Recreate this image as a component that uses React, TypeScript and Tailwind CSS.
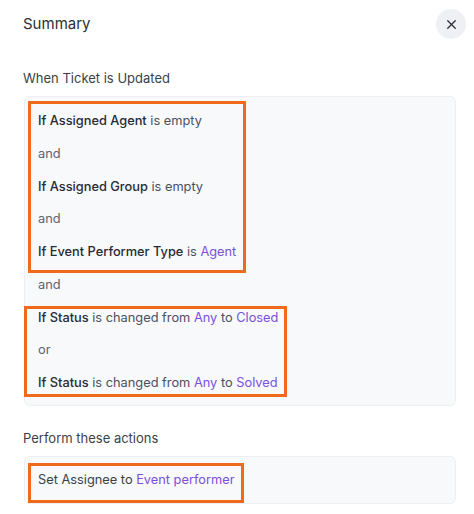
import React from "react";
import { X } from "lucide-react";

type Part = { text: string; kind?: "bold" | "value" };

const conditions: Part[][] = [
    [{ text: "If Assigned Agent", kind: "bold" }, { text: " is empty" }],
    [{ text: "and" }],
    [{ text: "If Assigned Group", kind: "bold" }, { text: " is empty" }],
    [{ text: "and" }],
    [{ text: "If Event Performer Type", kind: "bold" }, { text: " is " }, { text: "Agent", kind: "value" }],
    [{ text: "and" }],
    [
        { text: "If Status", kind: "bold" },
        { text: " is changed from " },
        { text: "Any", kind: "value" },
        { text: " to " },
        { text: "Closed", kind: "value" },
    ],
    [{ text: "or" }],
    [
        { text: "If Status", kind: "bold" },
        { text: " is changed from " },
        { text: "Any", kind: "value" },
        { text: " to " },
        { text: "Solved", kind: "value" },
    ],
];

function Line({ parts }: { parts: Part[] }) {
    const plain = parts.length === 1 && !parts[0].kind;
    return (
        <div className={plain ? "h-[32.75px] leading-[32.75px] text-[#5d636e]" : "h-[32.75px] leading-[32.75px] text-[#4a505b]"}>
            {parts.map((p, i) =>
                p.kind === "bold" ? (
                    <span key={i} className="font-medium text-[#272b33]">
                        {p.text}
                    </span>
                ) : p.kind === "value" ? (
                    <span key={i} className="text-[#7b4fdc]">
                        {p.text}
                    </span>
                ) : (
                    <span key={i}>{p.text}</span>
                )
            )}
        </div>
    );
}

export default function App() {
    return (
        <div
            className="w-[474px] h-[514px] bg-white pl-6 pr-[18px] text-[13px] overflow-hidden"
            style={{ fontFamily: "Inter, 'Noto Sans', sans-serif" }}
        >
            <div className="h-12 flex items-center justify-between">
                <div className="text-[15px] text-[#2b2f37] -ml-px">Summary</div>
                <button className="w-[30px] h-[30px] rounded-full bg-[#eef0f3] flex items-center justify-center -mr-[10px] text-[#2d3139]">
                    <X size={15} strokeWidth={2.2} />
                </button>
            </div>

            <div className="mt-[20px] h-5 leading-5 text-[#3a3f48] -ml-px">When Ticket is Updated</div>
            <div className="relative mt-2 rounded-md border border-[#eceef2] bg-[#f8f9fb] pl-[13px] pt-[8px] pb-[5px] text-[12.8px]">
                {conditions.map((parts, i) => (
                    <Line key={i} parts={parts} />
                ))}
                <div className="absolute left-[3px] top-[4px] w-[218px] h-[172px] border-[3px] border-[#f06a1b]" />
                <div className="absolute -left-px top-[209px] w-[263px] h-[91px] border-[3px] border-[#f06a1b]" />
            </div>

            <div className="mt-[22px] h-5 leading-5 text-[#3a3f48] -ml-px">Perform these actions</div>
            <div className="relative mt-2 h-[48px] rounded-md border border-[#eceef2] bg-[#f8f9fb] pl-[13px] flex items-center text-[12.8px]">
                <div className="text-[#3a3f48]">
                    Set Assignee to <span className="text-[#7b4fdc]">Event performer</span>
                </div>
                <div className="absolute left-[3px] top-[6px] w-[216px] h-[40px] border-[3px] border-[#f06a1b]" />
            </div>
        </div>
    );
}
